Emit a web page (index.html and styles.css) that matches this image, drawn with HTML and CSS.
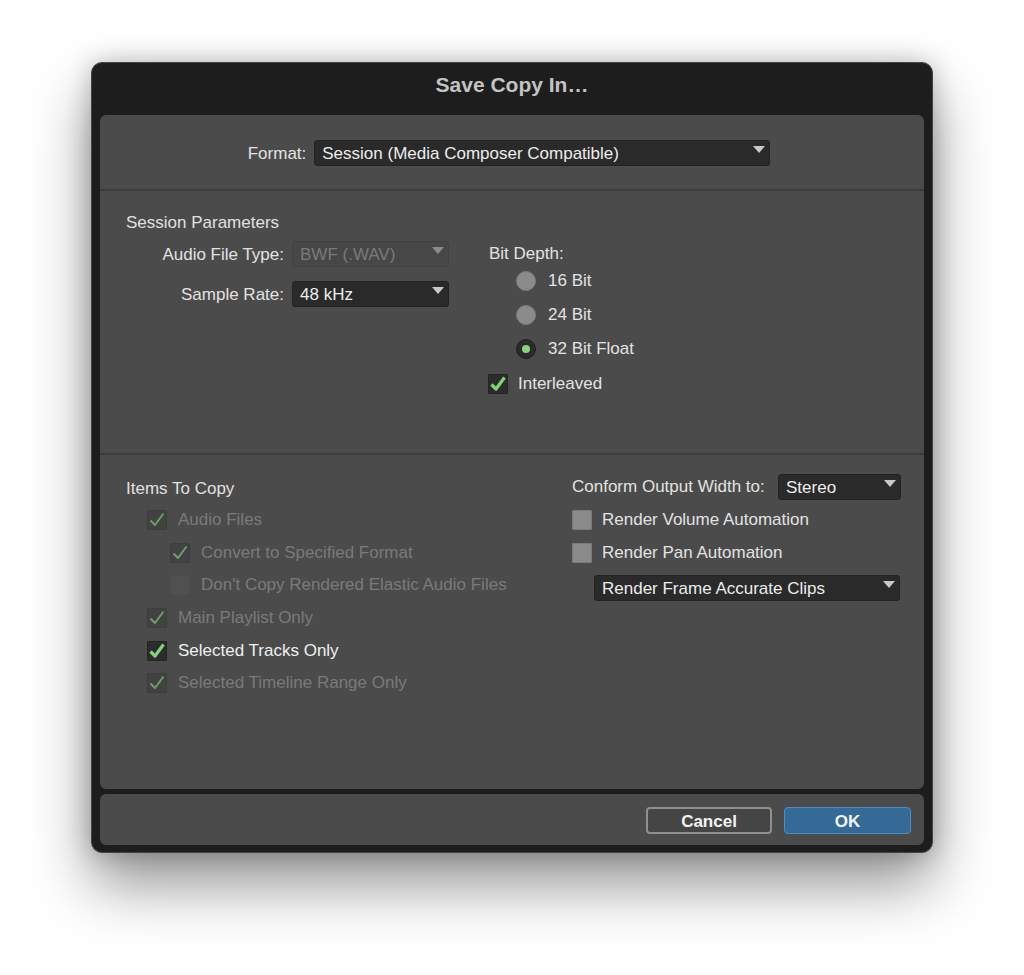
FILE: index.html
```html
<!DOCTYPE html>
<html lang="en">
<head>
    <meta charset="UTF-8">
    <title>Save Copy In...</title>
    <link rel="stylesheet" href="styles.css">
</head>
<body>

    <div class="stage">
        <div class="window">
            <div class="titlebar">Save Copy In…</div>

            <div class="panel main">
                <div class="section format-section">
                    <span class="field-label">Format:</span>
                    <div class="select wide">Session (Media Composer Compatible)</div>
                </div>

                <div class="section params">
                    <div class="params-left">
                        <div class="heading">Session Parameters</div>
                        <div class="form-grid">
                            <span class="field-label">Audio File Type:</span>
                            <div class="select disabled">BWF (.WAV)</div>
                            <span class="field-label">Sample Rate:</span>
                            <div class="select">48 kHz</div>
                        </div>
                    </div>
                    <div class="bit-depth">
                        <div class="bd-label">Bit Depth:</div>
                        <div class="radio-row"><span class="radio"></span>16 Bit</div>
                        <div class="radio-row"><span class="radio"></span>24 Bit</div>
                        <div class="radio-row"><span class="radio selected"></span>32 Bit Float</div>
                        <div class="interleaved">
                            <span class="checkbox checked">
                                <svg viewBox="0 0 20 20"><path d="M3.5 10.5 L8 15 L16.5 3.5"/></svg>
                            </span>
                            Interleaved
                        </div>
                    </div>
                </div>

                <div class="section items">
                    <div class="items-left">
                        <div class="heading">Items To Copy</div>
                        <div class="check-row dim">
                            <span class="checkbox checked off"><svg viewBox="0 0 20 20"><path d="M3.5 10.5 L8 15 L16.5 3.5"/></svg></span>
                            Audio Files
                        </div>
                        <div class="check-row dim sub">
                            <span class="checkbox checked off"><svg viewBox="0 0 20 20"><path d="M3.5 10.5 L8 15 L16.5 3.5"/></svg></span>
                            Convert to Specified Format
                        </div>
                        <div class="check-row dim sub">
                            <span class="checkbox empty-off"></span>
                            Don't Copy Rendered Elastic Audio Files
                        </div>
                        <div class="check-row dim">
                            <span class="checkbox checked off"><svg viewBox="0 0 20 20"><path d="M3.5 10.5 L8 15 L16.5 3.5"/></svg></span>
                            Main Playlist Only
                        </div>
                        <div class="check-row bright">
                            <span class="checkbox checked"><svg viewBox="0 0 20 20"><path d="M3.5 10.5 L8 15 L16.5 3.5"/></svg></span>
                            Selected Tracks Only
                        </div>
                        <div class="check-row dim">
                            <span class="checkbox checked off"><svg viewBox="0 0 20 20"><path d="M3.5 10.5 L8 15 L16.5 3.5"/></svg></span>
                            Selected Timeline Range Only
                        </div>
                    </div>

                    <div class="items-right">
                        <div class="conform-row">
                            <span>Conform Output Width to:</span>
                            <div class="select stereo">Stereo</div>
                        </div>
                        <div class="render-row"><span class="checkbox empty"></span>Render Volume Automation</div>
                        <div class="render-row"><span class="checkbox empty"></span>Render Pan Automation</div>
                        <div class="select clips">Render Frame Accurate Clips</div>
                    </div>
                </div>
            </div>

            <div class="panel footer">
                <button class="btn cancel">Cancel</button>
                <button class="btn ok">OK</button>
            </div>
        </div>
    </div>

</body>
</html>
```

FILE: styles.css
```css
body {
    margin: 0;
    background-color: #ffffff;
    font-family: "Liberation Sans", Arial, sans-serif;
    font-size: 17px;
    color: #e2e2e2;
}

.stage {
    min-height: 975px;
    box-sizing: border-box;
    padding: 62px 0 0 91px;
}

.window {
    width: 842px;
    height: 791px;
    box-sizing: border-box;
    display: flex;
    flex-direction: column;
    padding: 0 8px 7px;
    background-color: #1d1d1d;
    border: 1px solid #444;
    border-radius: 11px;
    box-shadow: 0 32px 60px rgba(0, 0, 0, 0.42), 0 0 24px rgba(0, 0, 0, 0.24);
}

.titlebar {
    height: 52px;
    line-height: 44px;
    text-align: center;
    font-size: 21px;
    font-weight: bold;
    color: #c3c3c3;
}

.panel {
    background-color: #4b4b4b;
    border-radius: 6px;
}

.main {
    height: 675px;
    display: flex;
    flex-direction: column;
}

.section {
    box-sizing: border-box;
    border-bottom: 2px solid #3b3b3b;
}

.field-label {
    line-height: 27px;
    text-align: right;
}

.heading {
    line-height: 18px;
    color: #e0e0e0;
}

/* dropdowns */

.select {
    position: relative;
    height: 26px;
    box-sizing: border-box;
    padding: 1px 7px 0;
    line-height: 23px;
    background-color: #2a2a2a;
    border: 1px solid #222;
    border-radius: 3px;
    color: #ececec;
    white-space: nowrap;
}

.select::after {
    content: "";
    position: absolute;
    top: 5px;
    right: 4px;
    border-left: 6px solid transparent;
    border-right: 6px solid transparent;
    border-top: 7px solid #c9c9c9;
}

.select.disabled {
    background-color: #474747;
    border-color: #414141;
    color: #7a7a7a;
}

.select.disabled::after {
    border-top-color: #8a8a8a;
}

/* format */

.format-section {
    height: 76px;
    display: flex;
    justify-content: center;
    align-items: flex-start;
    gap: 8px;
    padding: 25px 6px 0 0;
}

.select.wide {
    width: 456px;
}

/* session parameters */

.params {
    height: 264px;
    display: flex;
    align-items: flex-start;
    padding: 23px 0 0 26px;
}

.params-left {
    width: 363px;
}

.params-left .heading {
    margin-bottom: 9px;
}

.form-grid {
    display: grid;
    grid-template-columns: 158px 157px;
    column-gap: 8px;
    row-gap: 13px;
}

.bit-depth {
    margin-top: 27px;
}

.bd-label {
    line-height: 26px;
    margin-bottom: -3px;
}

.radio-row {
    height: 34px;
    display: flex;
    align-items: center;
    gap: 12px;
    padding-left: 27px;
}

.radio {
    width: 20px;
    height: 20px;
    box-sizing: border-box;
    border-radius: 50%;
    background-color: #8b8b8b;
    border: 1px solid #7c7c7c;
}

.radio.selected {
    position: relative;
    background-color: #2b2b2b;
    border-color: #1f1f1f;
}

.radio.selected::after {
    content: "";
    position: absolute;
    top: 5px;
    left: 5px;
    width: 8px;
    height: 8px;
    border-radius: 50%;
    background-color: #86d47e;
}

.interleaved {
    height: 34px;
    display: flex;
    align-items: center;
    gap: 10px;
    margin: 1px 0 0 -1px;
}

/* checkboxes */

.checkbox {
    width: 20px;
    height: 20px;
    box-sizing: border-box;
    flex-shrink: 0;
    border-radius: 1px;
}

.checkbox svg {
    display: block;
    width: 20px;
    height: 20px;
    fill: none;
    stroke: #84d27c;
    stroke-width: 3.2;
    stroke-linejoin: round;
}

.checkbox.checked {
    background-color: #2c2c2c;
    border: 1px solid #242424;
}

.checkbox.checked svg {
    margin: -1px;
}

.checkbox.checked.off {
    background-color: #424242;
    border-color: #3d3d3d;
}

.checkbox.checked.off svg {
    stroke: #6f9d6b;
    stroke-width: 2;
}

.checkbox.empty-off {
    background-color: #515151;
    border: 1px solid #4d4d4d;
}

.checkbox.empty {
    background-color: #8b8b8b;
    border: 1px solid #7a7a7a;
}

/* items to copy */

.items {
    flex: 1;
    border-bottom: none;
    display: flex;
    justify-content: space-between;
    align-items: flex-start;
    padding: 19px 23px 0 26px;
}

.items-left {
    padding-top: 5px;
}

.items-left .heading {
    line-height: 20px;
    margin-bottom: 5px;
}

.check-row {
    height: 32.6px;
    display: flex;
    align-items: center;
    gap: 11px;
    padding-left: 21px;
}

.check-row.sub {
    padding-left: 44px;
}

.check-row.dim {
    color: #7a7a7a;
}

.check-row.bright {
    color: #efefef;
}

.items-right {
    width: 329px;
}

.conform-row {
    display: flex;
    justify-content: space-between;
    align-items: center;
}

.select.stereo {
    width: 123px;
}

.render-row {
    height: 33px;
    display: flex;
    align-items: center;
    gap: 10px;
}

.conform-row + .render-row {
    margin-top: 4px;
}

.select.clips {
    width: 306px;
    margin: 5px 0 0 22px;
}

/* footer */

.footer {
    margin-top: 5px;
    height: 51px;
    box-sizing: border-box;
    display: flex;
    justify-content: flex-end;
    align-items: flex-start;
    gap: 12px;
    padding: 13px 13px 0;
}

.btn {
    width: 127px;
    height: 27px;
    box-sizing: border-box;
    padding: 2px 0 0;
    border-radius: 4px;
    font-family: "Liberation Sans", Arial, sans-serif;
    font-size: 17px;
    font-weight: bold;
    color: #f4f4f4;
}

.btn.cancel {
    width: 126px;
    background-color: #454545;
    border: 2px solid #8f8f8f;
}

.btn.ok {
    background-color: #356a97;
    border: 1px solid #4c8dc5;
}
```
